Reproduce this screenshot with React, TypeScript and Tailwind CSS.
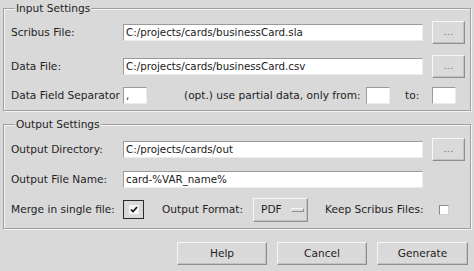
import React from 'react';

const Entry = ({ value = '', width }: { value?: string; width: string }) => (
  <div
    className={`${width} h-[17px] bg-white border border-t-[#9a9a9a] border-l-[#9a9a9a] border-b-[#ececec] border-r-[#ececec] pl-[2px] leading-[15px] text-[10.3px] text-[#1a1a1a] whitespace-nowrap overflow-hidden`}
  >
    {value}
  </div>
);

const RaisedButton = ({ children, className = '' }: { children: React.ReactNode; className?: string }) => (
  <button
    className={`bg-[#dadada] border border-t-[#f6f6f6] border-l-[#f6f6f6] border-b-[#8e8e8e] border-r-[#8e8e8e] shadow-[inset_-1px_-1px_0_#c2c2c2] flex items-center justify-center ${className}`}
  >
    {children}
  </button>
);

const BrowseButton = () => (
  <RaisedButton className="w-[33px] h-[23px] ml-[9px]">
    <span className="text-[9px] text-[#666] leading-none tracking-[0.5px]">...</span>
  </RaisedButton>
);

const Group = ({ title, children, className = '' }: { title: string; children: React.ReactNode; className?: string }) => (
  <fieldset
    className={`w-[468px] border border-[#a0a0a0] shadow-[inset_1px_1px_0_#f4f4f4,1px_1px_0_#f4f4f4] pl-[7px] pr-[4px] ${className}`}
  >
    <legend className="ml-[4px] px-[1px] bg-[#d9d9d9] leading-[14px] text-[10.6px]">{title}</legend>
    {children}
  </fieldset>
);

export default function App() {
  return (
    <div
      className="w-[474px] h-[271px] bg-[#d9d9d9] pt-[1px] pl-[3px] text-[10.6px] text-[#1e1e1e] overflow-hidden"
      style={{ fontFamily: '"DejaVu Sans", "Liberation Sans", sans-serif' }}
    >
      {/* Input Settings */}
      <Group title="Input Settings" className="pt-[5px] pb-[2px]">
        <div className="flex items-center h-[25px]">
          <span className="w-[112px]">Scribus File:</span>
          <Entry value="C:/projects/cards/businessCard.sla" width="w-[300px]" />
          <BrowseButton />
        </div>
        <div className="flex items-center h-[25px] mt-[9px]">
          <span className="w-[112px]">Data File:</span>
          <Entry value="C:/projects/cards/businessCard.csv" width="w-[300px]" />
          <BrowseButton />
        </div>
        <div className="flex items-center h-[25px] mt-[4px]">
          <span className="w-[112px]">Data Field Separator</span>
          <Entry value="," width="w-[24px]" />
          <span className="w-[219px] pl-[37px] whitespace-nowrap">(opt.) use partial data, only from:</span>
          <Entry width="w-[24px]" />
          <span className="w-[42px] pl-[15px]">to:</span>
          <Entry width="w-[24px]" />
        </div>
      </Group>

      {/* Output Settings */}
      <Group title="Output Settings" className="mt-[6px] pt-[6px] pb-[6px]">
        <div className="flex items-center h-[25px]">
          <span className="w-[112px]">Output Directory:</span>
          <Entry value="C:/projects/cards/out" width="w-[300px]" />
          <BrowseButton />
        </div>
        <div className="flex items-center h-[25px] mt-[5px]">
          <span className="w-[112px]">Output File Name:</span>
          <Entry value="card-%VAR_name%" width="w-[300px]" />
        </div>
        <div className="flex items-center h-[25px] mt-[5px]">
          <span className="w-[112px] whitespace-nowrap">Merge in single file:</span>
          <div className="w-[21px] h-[19px] border border-[#2a2a2a] flex items-center justify-center">
            <div className="w-[10px] h-[9px] bg-[#f4f4f4] flex items-center justify-center">
              <svg width="8" height="7" viewBox="0 0 8 7">
                <path d="M1 3.5 L3 5.5 L7 1" fill="none" stroke="#111" strokeWidth="1.7" />
              </svg>
            </div>
          </div>
          <span className="w-[109px] pl-[18px] whitespace-nowrap">Output Format:</span>
          <RaisedButton className="w-[55px] h-[24px] !justify-start pl-[7px]">
            <span className="text-[10.6px] text-[#1e1e1e]">PDF</span>
            <span className="ml-[9px] w-[13px] h-[4px] bg-[#dadada] border border-t-[#f6f6f6] border-l-[#f6f6f6] border-b-[#8e8e8e] border-r-[#8e8e8e]" />
          </RaisedButton>
          <span className="w-[131px] pl-[17px] whitespace-nowrap">Keep Scribus Files:</span>
          <div className="w-[10px] h-[10px] bg-white border border-t-[#8a8a8a] border-l-[#8a8a8a] border-b-[#d0d0d0] border-r-[#d0d0d0]" />
        </div>
      </Group>

      {/* Buttons */}
      <div className="flex justify-end gap-[10px] mt-[13px] w-[468px] pr-[3px]">
        <RaisedButton className="w-[90px] h-[23px]">Help</RaisedButton>
        <RaisedButton className="w-[90px] h-[23px]">Cancel</RaisedButton>
        <RaisedButton className="w-[91px] h-[23px]">Generate</RaisedButton>
      </div>
    </div>
  );
}
